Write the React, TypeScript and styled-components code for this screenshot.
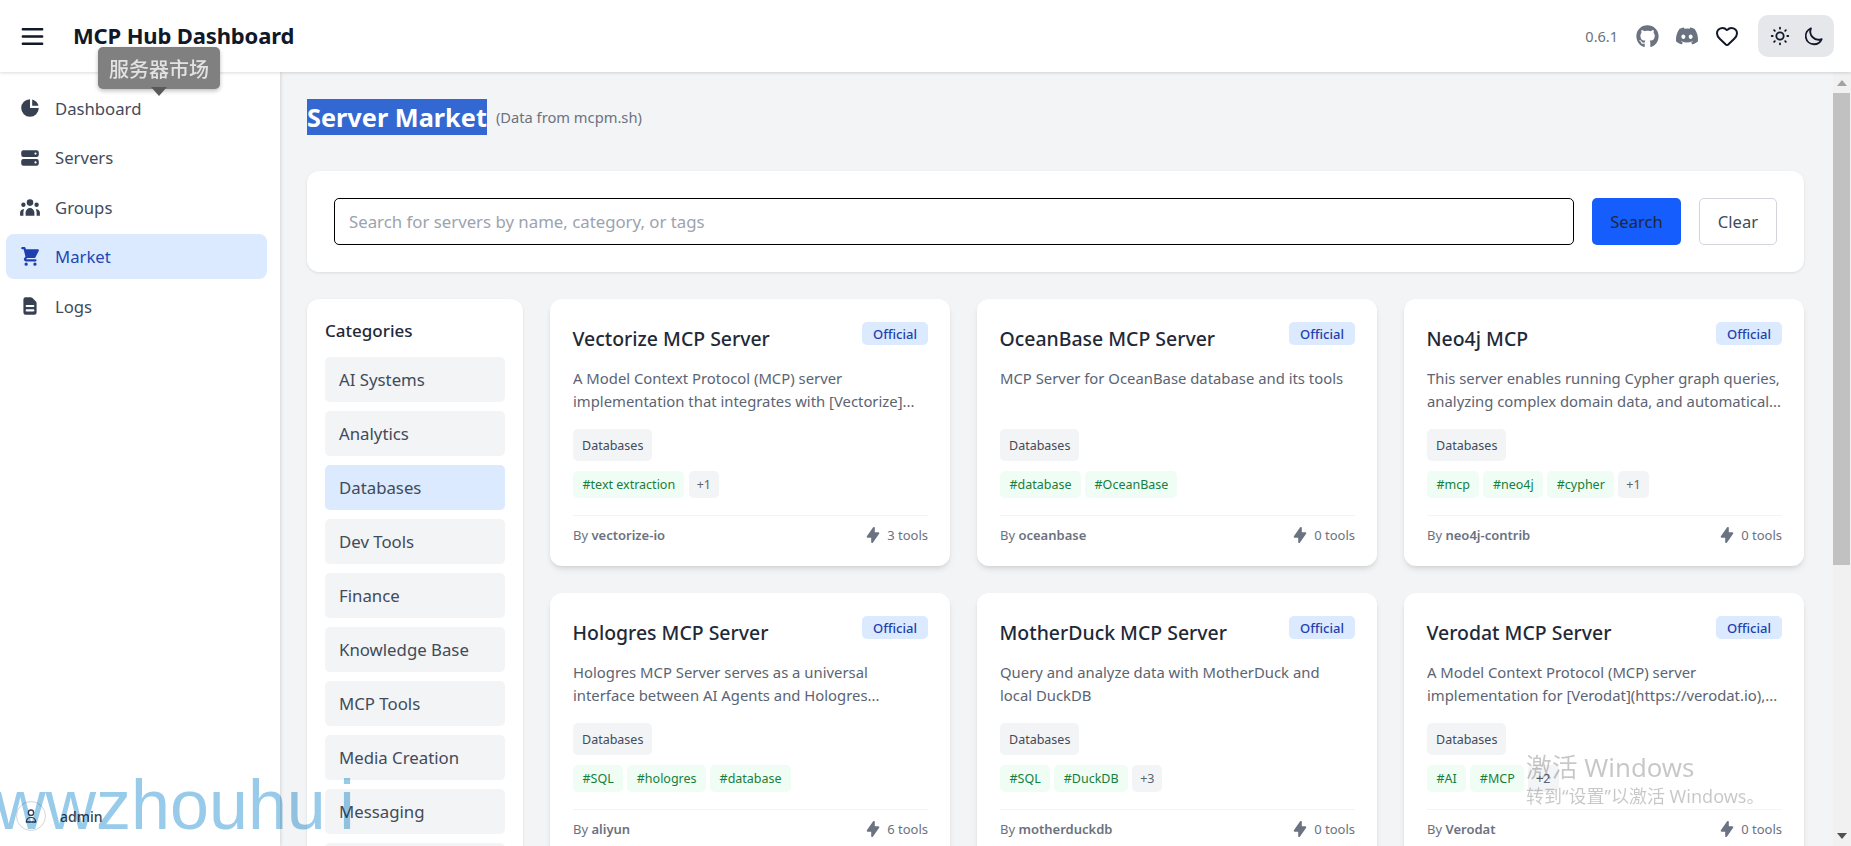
import styled, { createGlobalStyle } from 'styled-components';
import { FaGithub, FaDiscord } from 'react-icons/fa';
import { Heart } from 'lucide-react';
import {
  HiChartPie,
  HiServer,
  HiUserGroup,
  HiShoppingCart,
  HiDocumentText,
  HiLightningBolt,
  HiOutlineMenu,
  HiOutlineSun,
  HiOutlineMoon,
  HiOutlineUser,
} from 'react-icons/hi';

const navItems = [
  { label: 'Dashboard', icon: HiChartPie },
  { label: 'Servers', icon: HiServer },
  { label: 'Groups', icon: HiUserGroup },
  { label: 'Market', icon: HiShoppingCart, active: true },
  { label: 'Logs', icon: HiDocumentText },
];

const categories = [
  'AI Systems',
  'Analytics',
  'Databases',
  'Dev Tools',
  'Finance',
  'Knowledge Base',
  'MCP Tools',
  'Media Creation',
  'Messaging',
  'Productivity',
];

const servers = [
  {
    name: 'Vectorize MCP Server',
    desc: 'A Model Context Protocol (MCP) server implementation that integrates with [Vectorize]...',
    tags: ['#text extraction'],
    more: '+1',
    author: 'vectorize-io',
    tools: 3,
  },
  {
    name: 'OceanBase MCP Server',
    desc: 'MCP Server for OceanBase database and its tools',
    tags: ['#database', '#OceanBase'],
    author: 'oceanbase',
    tools: 0,
  },
  {
    name: 'Neo4j MCP',
    desc: 'This server enables running Cypher graph queries, analyzing complex domain data, and automatical...',
    tags: ['#mcp', '#neo4j', '#cypher'],
    more: '+1',
    author: 'neo4j-contrib',
    tools: 0,
  },
  {
    name: 'Hologres MCP Server',
    desc: 'Hologres MCP Server serves as a universal interface between AI Agents and Hologres...',
    tags: ['#SQL', '#hologres', '#database'],
    author: 'aliyun',
    tools: 6,
  },
  {
    name: 'MotherDuck MCP Server',
    desc: 'Query and analyze data with MotherDuck and local DuckDB',
    tags: ['#SQL', '#DuckDB'],
    more: '+3',
    author: 'motherduckdb',
    tools: 0,
  },
  {
    name: 'Verodat MCP Server',
    desc: 'A Model Context Protocol (MCP) server implementation for [Verodat](https://verodat.io),...',
    tags: ['#AI', '#MCP'],
    more: '+2',
    author: 'Verodat',
    tools: 0,
  },
];

const App = () => (
  <>
    <GlobalStyle />
    <Shell>
      <Header>
        <MenuButton>
          <HiOutlineMenu size={29} />
        </MenuButton>
        <AppTitle>MCP Hub Dashboard</AppTitle>
        <HeaderRight>
          <Version>0.6.1</Version>
          <LinkIcon $color="#6b7280">
            <FaGithub size={23} />
          </LinkIcon>
          <LinkIcon $color="#6b7280">
            <FaDiscord size={24} />
          </LinkIcon>
          <LinkIcon $color="#111827">
            <Heart size={24} strokeWidth={2} />
          </LinkIcon>
          <ThemeSwitch>
            <HiOutlineSun size={22} />
            <HiOutlineMoon size={22} />
          </ThemeSwitch>
        </HeaderRight>
      </Header>
      <Body>
        <Sidebar>
          <Nav>
            {navItems.map(({ label, icon: Icon, active }) => (
              <NavItem key={label} $active={active}>
                <Icon size={22} />
                <span>{label}</span>
              </NavItem>
            ))}
          </Nav>
          <UserRow>
            <Avatar>
              <HiOutlineUser size={16} />
            </Avatar>
            <UserName>admin</UserName>
          </UserRow>
        </Sidebar>
        <Main>
          <TitleRow>
            <PageTitle>Server Market</PageTitle>
            <PageSource>(Data from mcpm.sh)</PageSource>
          </TitleRow>
          <SearchCard>
            <SearchInput placeholder="Search for servers by name, category, or tags" />
            <SearchButton>Search</SearchButton>
            <ClearButton>Clear</ClearButton>
          </SearchCard>
          <Content>
            <CategoryPanel>
              <CategoryTitle>Categories</CategoryTitle>
              <CategoryList>
                {categories.map((c) => (
                  <CategoryItem key={c} $active={c === 'Databases'}>
                    {c}
                  </CategoryItem>
                ))}
              </CategoryList>
            </CategoryPanel>
            <CardGrid>
              {servers.map((s) => (
                <Card key={s.name}>
                  <CardHead>
                    <CardTitle>{s.name}</CardTitle>
                    <OfficialBadge>Official</OfficialBadge>
                  </CardHead>
                  <CardDesc>{s.desc}</CardDesc>
                  <CategoryTag>Databases</CategoryTag>
                  <TagRow>
                    {s.tags.map((t) => (
                      <Tag key={t}>{t}</Tag>
                    ))}
                    {s.more ? <MoreTag>{s.more}</MoreTag> : null}
                  </TagRow>
                  <CardFooter>
                    <span>
                      By <Author>{s.author}</Author>
                    </span>
                    <Tools>
                      <HiLightningBolt size={18} />
                      {s.tools} tools
                    </Tools>
                  </CardFooter>
                </Card>
              ))}
            </CardGrid>
          </Content>
        </Main>
        <ScrollRail>
          <ScrollArrow $up />
          <ScrollThumb />
          <ScrollArrow />
        </ScrollRail>
      </Body>
    </Shell>
    <Tooltip>服务器市场</Tooltip>
    <BlogMark>wwzhouhu i</BlogMark>
    <ActivateNote>
      <ActivateTitle>激活 Windows</ActivateTitle>
      <ActivateHint>转到“设置”以激活 Windows。</ActivateHint>
    </ActivateNote>
  </>
);

export default App;

const GlobalStyle = createGlobalStyle`
  html, body {
    margin: 0;
    height: 100%;
    overflow: hidden;
  }
  body {
    font-family: "Noto Sans", "Noto Sans CJK SC", sans-serif;
    color: #374151;
    background: #f3f4f6;
  }
  * {
    box-sizing: border-box;
  }
`;

const Shell = styled.div`
  height: 100vh;
  display: flex;
  flex-direction: column;
`;

const Header = styled.header`
  height: 72px;
  flex: none;
  display: flex;
  align-items: center;
  padding: 0 17px 0 18px;
  background: #fff;
  box-shadow: 0 1px 3px rgba(0, 0, 0, 0.15);
  position: relative;
  z-index: 2;
`;

const MenuButton = styled.div`
  display: flex;
  color: #111827;
`;

const AppTitle = styled.h1`
  margin: -2px 0 0 26px;
  font-size: 22px;
  font-weight: 700;
  color: #111827;
  letter-spacing: -0.15px;
`;

const HeaderRight = styled.div`
  margin-left: auto;
  display: flex;
  align-items: center;
`;

const Version = styled.span`
  font-size: 14.5px;
  color: #6b7280;
  margin-right: 17px;
`;

const LinkIcon = styled.span<{ $color: string }>`
  display: flex;
  width: 24px;
  justify-content: center;
  margin-right: 16px;
  color: ${({ $color }) => $color};
`;

const ThemeSwitch = styled.div`
  width: 76px;
  height: 42px;
  margin-left: 3px;
  border-radius: 10px;
  background: #e5e7eb;
  display: flex;
  align-items: center;
  justify-content: space-between;
  padding: 0 9px 0 11px;
  color: #111827;
`;

const Body = styled.div`
  flex: 1;
  min-height: 0;
  display: flex;
`;

const Sidebar = styled.aside`
  width: 280px;
  flex: none;
  display: flex;
  flex-direction: column;
  justify-content: space-between;
  background: #fff;
  box-shadow: 1px 0 3px rgba(0, 0, 0, 0.12);
  position: relative;
  z-index: 1;
`;

const Nav = styled.nav`
  display: flex;
  flex-direction: column;
  gap: 4.5px;
  padding: 13.5px 13px 0 6px;
`;

const NavItem = styled.div<{ $active?: boolean }>`
  height: 45px;
  display: flex;
  align-items: center;
  gap: 14px;
  padding-left: 13px;
  border-radius: 8px;
  font-size: 16.7px;
  background: ${({ $active }) => ($active ? '#dbeafe' : 'transparent')};
  color: ${({ $active }) => ($active ? '#2546b5' : '#414b5a')};

  svg {
    color: ${({ $active }) => ($active ? '#1e40af' : '#374151')};
  }
`;

const UserRow = styled.div`
  display: flex;
  align-items: center;
  gap: 14px;
  padding: 0 0 15px 16px;
`;

const Avatar = styled.div`
  width: 30px;
  height: 30px;
  border-radius: 50%;
  border: 1px solid #d1d5db;
  display: flex;
  align-items: center;
  justify-content: center;
  color: #374151;
`;

const UserName = styled.span`
  font-size: 14px;
  font-weight: 500;
  color: #374151;
`;

const Main = styled.main`
  flex: 1;
  min-width: 0;
  overflow: hidden;
  padding: 27px 29px 0 27px;
`;

const ScrollRail = styled.div`
  width: 18px;
  flex: none;
  display: flex;
  flex-direction: column;
  justify-content: space-between;
  background: #f1f1f1;
`;

const ScrollArrow = styled.div<{ $up?: boolean }>`
  height: 21px;
  display: flex;
  align-items: center;
  justify-content: center;

  &::before {
    content: '';
    border-left: 5px solid transparent;
    border-right: 5px solid transparent;
    ${({ $up }) =>
      $up ? 'border-bottom: 6px solid #a3a3a3;' : 'border-top: 6px solid #505050;'}
  }
`;

const ScrollThumb = styled.div`
  width: 17px;
  height: 472px;
  margin-bottom: auto;
  background: #c1c1c1;
`;

const TitleRow = styled.div`
  display: flex;
  align-items: center;
  gap: 9px;
  height: 36px;
  margin-bottom: 36px;
`;

const PageTitle = styled.h2`
  margin: 0;
  height: 36px;
  line-height: 36px;
  font-size: 25.3px;
  font-weight: 700;
  color: #fff;
  background: #3367d1;
`;

const PageSource = styled.span`
  font-size: 14.7px;
  color: #6b7280;
`;

const SearchCard = styled.div`
  height: 101px;
  display: flex;
  align-items: center;
  gap: 18px;
  padding: 0 27px;
  background: #fff;
  border-radius: 12px;
  box-shadow: 0 1px 3px rgba(0, 0, 0, 0.1);
  margin-bottom: 27px;
`;

const SearchInput = styled.input`
  flex: 1;
  height: 47px;
  padding: 0 14px;
  border: 1px solid #000;
  border-radius: 5px;
  outline: none;
  font: inherit;
  font-size: 16.8px;

  &::placeholder {
    color: #9ca3af;
  }
`;

const SearchButton = styled.button`
  width: 89px;
  height: 47px;
  border: none;
  border-radius: 5px;
  background: #155dfc;
  color: #1f2937;
  font: inherit;
  font-size: 16.6px;
`;

const ClearButton = styled.button`
  width: 78px;
  height: 47px;
  border: 1px solid #d1d5db;
  border-radius: 5px;
  background: #fff;
  color: #414b5a;
  font: inherit;
  font-size: 16.6px;
`;

const Content = styled.div`
  display: flex;
  align-items: flex-start;
  gap: 27px;
`;

const CategoryPanel = styled.div`
  width: 216px;
  flex: none;
  padding: 18px;
  background: #fff;
  border-radius: 12px;
  box-shadow: 0 1px 3px rgba(0, 0, 0, 0.1);
`;

const CategoryTitle = styled.h3`
  margin: -1px 0 12px;
  height: 29px;
  line-height: 29px;
  font-size: 17px;
  font-weight: 500;
  color: #1f2937;
`;

const CategoryList = styled.div`
  display: flex;
  flex-direction: column;
  gap: 9px;
`;

const CategoryItem = styled.div<{ $active?: boolean }>`
  height: 45px;
  display: flex;
  align-items: center;
  padding-left: 14px;
  border-radius: 5px;
  font-size: 16.8px;
  background: ${({ $active }) => ($active ? '#dbeafe' : '#f3f4f6')};
  color: #414b5a;
`;

const CardGrid = styled.div`
  flex: 1;
  min-width: 0;
  display: grid;
  grid-template-columns: repeat(3, 1fr);
  column-gap: 27px;
  row-gap: 27.5px;
`;

const Card = styled.div`
  height: 266.5px;
  padding: 22px 22px 22px 23px;
  background: #fff;
  border-radius: 12px;
  box-shadow: 0 4px 6px -1px rgba(0, 0, 0, 0.1), 0 2px 4px -2px rgba(0, 0, 0, 0.1);
`;

const CardHead = styled.div`
  display: flex;
  align-items: flex-start;
  justify-content: space-between;
  height: 34px;
  margin-bottom: 11.5px;
`;

const CardTitle = styled.h4`
  margin: 1px 0 0 -0.5px;
  line-height: 34px;
  font-size: 19.45px;
  font-weight: 500;
  color: #1f2937;
`;

const OfficialBadge = styled.span`
  width: 66px;
  height: 23px;
  margin-top: 1px;
  border-radius: 5px;
  background: #dbeafe;
  color: #1e40af;
  font-size: 13px;
  font-weight: 500;
  display: flex;
  align-items: center;
  justify-content: center;
`;

const CardDesc = styled.p`
  margin: 0 0 16.5px;
  height: 46px;
  line-height: 23px;
  font-size: 14.85px;
  color: #5b6472;
  overflow: hidden;
`;

const CategoryTag = styled.span`
  display: inline-flex;
  align-items: center;
  height: 32px;
  padding: 0 9px;
  border-radius: 5px;
  background: #f3f4f6;
  color: #414b5a;
  font-size: 12.5px;
`;

const TagRow = styled.div`
  display: flex;
  gap: 4.5px;
  margin-top: 10px;
  margin-bottom: 17px;
`;

const Tag = styled.span`
  display: inline-flex;
  align-items: center;
  height: 27px;
  padding: 0 9px 0 9.5px;
  border-radius: 5px;
  background: #f0fdf4;
  color: #15803d;
  font-size: 12.5px;
`;

const MoreTag = styled(Tag)`
  padding: 0 8px;
  background: #f3f4f6;
  color: #5b6472;
`;

const CardFooter = styled.div`
  display: flex;
  align-items: center;
  justify-content: space-between;
  border-top: 1px solid #f3f4f6;
  padding-top: 10px;
  font-size: 13px;
  color: #6b7280;
`;

const Author = styled.span`
  font-weight: 600;
`;

const Tools = styled.span`
  display: flex;
  align-items: center;
  gap: 5px;
`;

const Tooltip = styled.div`
  position: fixed;
  left: 98px;
  top: 47px;
  width: 122px;
  height: 42px;
  z-index: 5;
  display: flex;
  align-items: center;
  justify-content: center;
  border-radius: 5px;
  background: #808080;
  color: #e2e2e2;
  font-size: 20px;
  font-weight: 500;
  box-shadow: 0 2px 4px rgba(0, 0, 0, 0.25);

  &::after {
    content: '';
    position: absolute;
    left: 53px;
    top: 40px;
    border-left: 8px solid transparent;
    border-right: 8px solid transparent;
    border-top: 9px solid #595959;
  }
`;

const BlogMark = styled.div`
  position: fixed;
  left: -5px;
  top: 763px;
  z-index: 6;
  font-family: "Liberation Sans", sans-serif;
  font-size: 70px;
  line-height: 85px;
  word-spacing: -6px;
  color: #97cbe9;
  mix-blend-mode: multiply;
  pointer-events: none;
  white-space: nowrap;
`;

const ActivateNote = styled.div`
  position: fixed;
  left: 1526px;
  top: 750px;
  z-index: 6;
  color: rgba(0, 0, 0, 0.22);
  pointer-events: none;
`;

const ActivateTitle = styled.div`
  font-size: 25.8px;
  line-height: 35px;
`;

const ActivateHint = styled.div`
  font-size: 18px;
  line-height: 22px;
`;
